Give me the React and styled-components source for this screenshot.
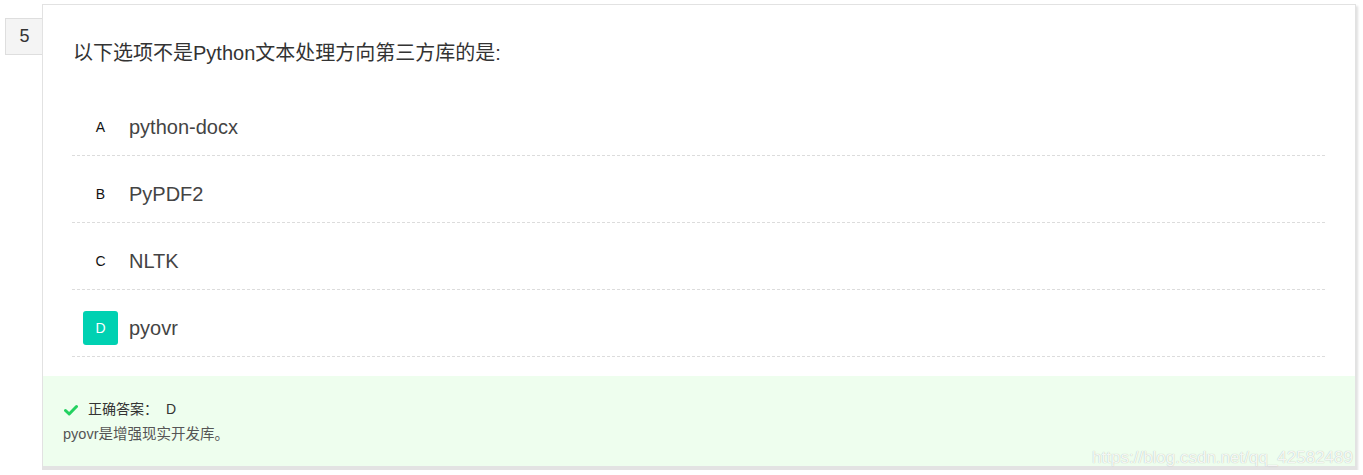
import React from 'react';
import styled, {createGlobalStyle} from 'styled-components';

const GlobalStyle = createGlobalStyle`
  html, body {
    margin: 0;
    padding: 0;
    background: #fff;
    font-family: "Liberation Sans", "Noto Sans CJK SC", sans-serif;
    color: #333;
  }
`;

const Page = styled.div`
  display: flex;
  align-items: flex-start;
  padding: 4px 7px 0 5px;
`;

const Number = styled.div`
  flex: none;
  width: 38px;
  height: 37px;
  margin-top: 14px;
  margin-right: -1px;
  display: flex;
  align-items: center;
  justify-content: center;
  background: #f4f4f4;
  border: 1px solid #dedede;
  border-right: none;
  font-size: 18px;
  color: #333;
  box-sizing: border-box;
`;

const Card = styled.div`
  position: relative;
  flex: 1;
  border: 1px solid #e2e2e2;
  border-bottom: 4px solid #e3e3e3;
  box-shadow: 2px 2px 2px rgba(0, 0, 0, 0.12);
  background: #fff;
`;

const Body = styled.div`
  padding: 34px 30px 19px 29px;
`;

const Question = styled.div`
  font-size: 20px;
  line-height: 28px;
  color: #333;
  margin-bottom: 22px;
  padding-left: 1px;
`;

const Option = styled.div`
  display: flex;
  align-items: center;
  height: 56px;
  padding-top: 10px;
  border-bottom: 1px dashed #dcdcdc;
`;

const Letter = styled.span`
  width: 35px;
  height: 34px;
  margin-left: 11px;
  margin-right: 11px;
  display: flex;
  align-items: center;
  justify-content: center;
  border-radius: 3px;
  font-size: 14px;
  background: ${p => (p.active ? '#00d1b2' : 'transparent')};
  color: ${p => (p.active ? '#fff' : '#111')};
`;

const OptionText = styled.span`
  font-size: 20px;
  color: #444;
`;

const Answer = styled.div`
  background: #eefeee;
  padding: 23px 20px 0 20px;
  height: 67px;
`;

const AnswerLine = styled.div`
  display: flex;
  align-items: center;
  font-size: 14px;
  line-height: 21px;
  color: #333;
`;

const AnswerKey = styled.span`
  margin-left: 8px;
`;

const Check = styled.svg`
  width: 14px;
  height: 14px;
  margin-left: 1px;
  margin-right: 10px;
`;

const Explain = styled.div`
  font-size: 14.5px;
  line-height: 20px;
  color: #555;
  margin-top: 4px;
`;

const Watermark = styled.div`
  position: absolute;
  right: 2px;
  bottom: -2px;
  font-size: 17px;
  color: rgba(255, 255, 255, 0.9);
  text-shadow: 0 0 1px rgba(0, 0, 0, 0.3);
`;

const options = [
  {key: 'A', text: 'python-docx'},
  {key: 'B', text: 'PyPDF2'},
  {key: 'C', text: 'NLTK'},
  {key: 'D', text: 'pyovr'},
];

export default function App() {
  const answer = 'D';
  return (
    <Page>
      <GlobalStyle/>
      <Number>5</Number>
      <Card>
        <Body>
          <Question>以下选项不是Python文本处理方向第三方库的是:</Question>
          {options.map(o =>
            <Option key={o.key}>
              <Letter active={o.key === answer}>{o.key}</Letter>
              <OptionText>{o.text}</OptionText>
            </Option>
          )}
        </Body>
        <Answer>
          <AnswerLine>
            <Check viewBox="0 0 14 14">
              <path d="M1.5 7.5 L5.2 11 L12.5 3.5" fill="none" stroke="#23d160" strokeWidth="3" strokeLinecap="round" strokeLinejoin="round"/>
            </Check>
            正确答案：<AnswerKey>{answer}</AnswerKey>
          </AnswerLine>
          <Explain>pyovr是增强现实开发库。</Explain>
        </Answer>
        <Watermark>https://blog.csdn.net/qq_42582489</Watermark>
      </Card>
    </Page>
  );
}
